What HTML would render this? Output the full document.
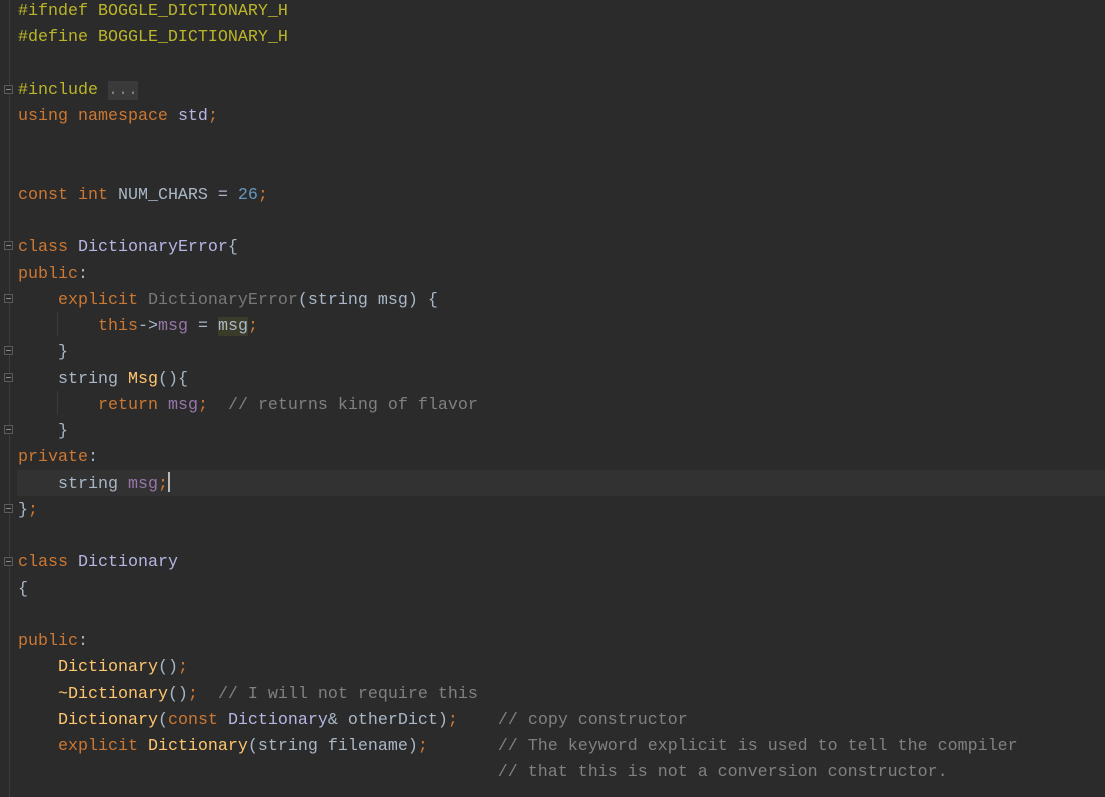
<!DOCTYPE html>
<html><head><meta charset="utf-8"><style>
html,body{margin:0;padding:0;background:#2b2b2b;width:1105px;height:797px;overflow:hidden}
.ed{position:absolute;left:18px;top:-1px;font-family:"Liberation Mono",monospace;font-size:16.67px;line-height:26.25px;color:#a9b7c6}
.l{height:26.25px;white-space:pre}
.pp{color:#bbb529}.k{color:#cc7832}.t{color:#b5b6e3}.f{color:#ffc66d}.m{color:#9876aa}.n{color:#6897bb}.c{color:#808080}.g{color:#787878}
.cur{position:absolute;left:17px;right:0;top:470px;height:26px;background:#323232}
.gl{position:absolute;left:9px;top:0;bottom:0;width:1px;background:#3c3c3c}
.ig{position:absolute;width:1px;background:#3b3b3b}
.fold{position:absolute;left:4px;width:9px;height:9px;border:1px solid #5a5a5a;background:#2b2b2b;box-sizing:border-box}
.fold:after{content:"";position:absolute;left:1px;right:1px;top:3px;height:1px;background:#8a8a8a}
.hl{background:#3b3b2a}
.dots{background:#3a3a3a;color:#808080}
.caret{display:inline-block;width:2px;height:20px;background:#bbbbbb;vertical-align:-4px}
</style></head><body>
<div class="gl"></div>
<div class="cur"></div>
<div class="ig" style="left:57px;top:312px;height:24px"></div>
<div class="ig" style="left:57px;top:391px;height:24px"></div>
<div class="fold" style="top:85px"></div>
<div class="fold" style="top:241px"></div>
<div class="fold" style="top:294px"></div>
<div class="fold" style="top:346px"></div>
<div class="fold" style="top:373px"></div>
<div class="fold" style="top:425px"></div>
<div class="fold" style="top:504px"></div>
<div class="fold" style="top:557px"></div>
<div class="ed"><div class="l"><span class="pp">#ifndef BOGGLE_DICTIONARY_H</span></div><div class="l"><span class="pp">#define BOGGLE_DICTIONARY_H</span></div><div class="l"> </div><div class="l"><span class="pp">#include</span> <span class="dots">...</span></div><div class="l"><span class="k">using namespace</span> <span class="t">std</span><span class="k">;</span></div><div class="l"> </div><div class="l"> </div><div class="l"><span class="k">const int</span> NUM_CHARS = <span class="n">26</span><span class="k">;</span></div><div class="l"> </div><div class="l"><span class="k">class</span> <span class="t">DictionaryError</span>{</div><div class="l"><span class="k">public</span>:</div><div class="l">    <span class="k">explicit</span> <span class="g">DictionaryError</span>(string msg) {</div><div class="l">        <span class="k">this</span>-&gt;<span class="m">msg</span> = <span class="hl">msg</span><span class="k">;</span></div><div class="l">    }</div><div class="l">    string <span class="f">Msg</span>(){</div><div class="l">        <span class="k">return</span> <span class="m">msg</span><span class="k">;</span>  <span class="c">// returns king of flavor</span></div><div class="l">    }</div><div class="l"><span class="k">private</span>:</div><div class="l">    string <span class="m">msg</span><span class="k">;</span><span class="caret"></span></div><div class="l">}<span class="k">;</span></div><div class="l"> </div><div class="l"><span class="k">class</span> <span class="t">Dictionary</span></div><div class="l">{</div><div class="l"> </div><div class="l"><span class="k">public</span>:</div><div class="l">    <span class="f">Dictionary</span>()<span class="k">;</span></div><div class="l">    <span class="f">~Dictionary</span>()<span class="k">;</span>  <span class="c">// I will not require this</span></div><div class="l">    <span class="f">Dictionary</span>(<span class="k">const</span> <span class="t">Dictionary</span>&amp; otherDict)<span class="k">;</span>    <span class="c">// copy constructor</span></div><div class="l">    <span class="k">explicit</span> <span class="f">Dictionary</span>(string filename)<span class="k">;</span>       <span class="c">// The keyword explicit is used to tell the compiler</span></div><div class="l">                                                <span class="c">// that this is not a conversion constructor.</span></div></div>
</body></html>
